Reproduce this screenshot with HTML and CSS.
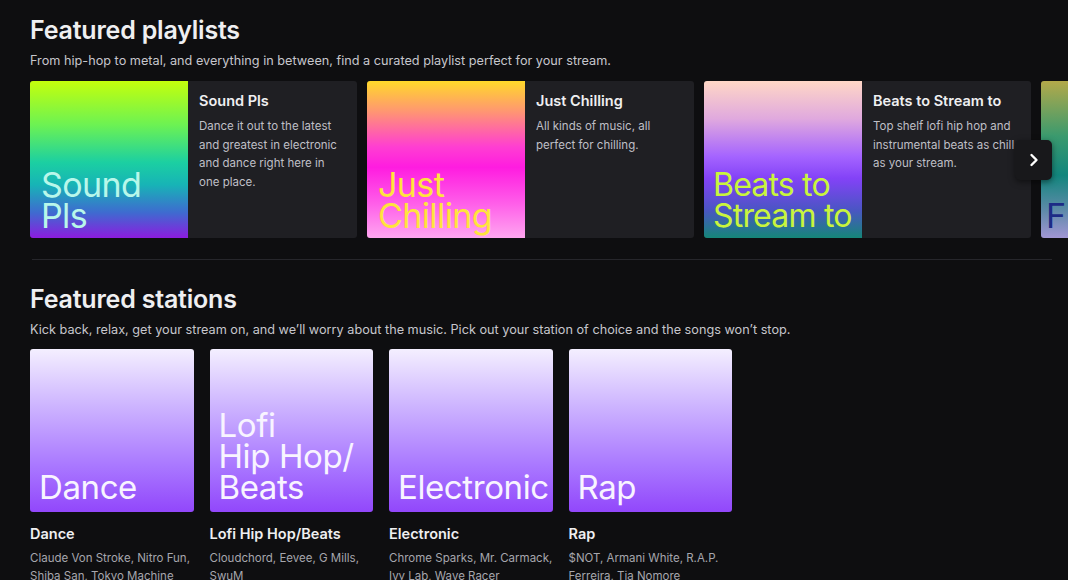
FILE: index.html
```html
<!DOCTYPE html>
<html lang="en">
<head>
  <meta charset="UTF-8">
  <meta name="viewport" content="width=device-width, initial-scale=1.0">
  <title>Soundtrack</title>
  <link rel="stylesheet" href="styles.css">
</head>
<body>
  <main class="page">
    <section class="shelf">
      <h2 class="shelf-title">Featured playlists</h2>
      <p class="shelf-sub">From hip-hop to metal, and everything in between, find a curated playlist perfect for your stream.</p>

      <div class="carousel">
        <div class="track">
          <div class="playlist">
            <div class="cover cover-sound"><span>Sound<br>Pls</span></div>
            <div class="playlist-info">
              <h3>Sound Pls</h3>
              <p>Dance it out to the latest and greatest in electronic and dance right here in one place.</p>
            </div>
          </div>

          <div class="playlist">
            <div class="cover cover-chill"><span>Just<br>Chilling</span></div>
            <div class="playlist-info">
              <h3>Just Chilling</h3>
              <p>All kinds of music, all perfect for chilling.</p>
            </div>
          </div>

          <div class="playlist">
            <div class="cover cover-beats"><span>Beats to<br>Stream to</span></div>
            <div class="playlist-info">
              <h3>Beats to Stream to</h3>
              <p>Top shelf lofi hip hop and instrumental beats as chill as your stream.</p>
            </div>
          </div>

          <div class="playlist">
            <div class="cover cover-focus"><span>F</span></div>
            <div class="playlist-info">
              <h3>Focus</h3>
              <p>Stay in the zone.</p>
            </div>
          </div>
        </div>

        <button class="next" aria-label="Next">
          <svg width="14" height="14" viewBox="0 0 14 14">
            <path d="M4.5 2 L9.5 7 L4.5 12" fill="none" stroke="#fff" stroke-width="2.4" stroke-linecap="round" stroke-linejoin="round"/>
          </svg>
        </button>
      </div>
    </section>

    <div class="divider"></div>

    <section class="shelf">
      <h2 class="shelf-title">Featured stations</h2>
      <p class="shelf-sub">Kick back, relax, get your stream on, and we’ll worry about the music. Pick out your station of choice and the songs won’t stop.</p>

      <div class="stations">
        <div class="station">
          <div class="station-cover"><span>Dance</span></div>
          <h3>Dance</h3>
          <p>Claude Von Stroke, Nitro Fun, Shiba San, Tokyo Machine</p>
        </div>
        <div class="station">
          <div class="station-cover"><span>Lofi<br>Hip Hop/<br>Beats</span></div>
          <h3>Lofi Hip Hop/Beats</h3>
          <p>Cloudchord, Eevee, G Mills, SwuM</p>
        </div>
        <div class="station">
          <div class="station-cover"><span>Electronic</span></div>
          <h3>Electronic</h3>
          <p>Chrome Sparks, Mr. Carmack, Ivy Lab, Wave Racer</p>
        </div>
        <div class="station">
          <div class="station-cover"><span>Rap</span></div>
          <h3>Rap</h3>
          <p>$NOT, Armani White, R.A.P. Ferreira, Tia Nomore</p>
        </div>
      </div>
    </section>
  </main>
</body>
</html>
```

FILE: styles.css
```css
/* General */
body {
  font-family: 'Inter', 'Noto Sans', sans-serif;
  margin: 0;
  padding: 0;
  background: #0e0e10;
  color: #efeff1;
  overflow: hidden;
}

.page {
  padding: 14px 0 0 30px;
}

.shelf-title {
  margin: 0;
  font-size: 25px;
  font-weight: 600;
  line-height: 32px;
  letter-spacing: -0.2px;
  color: #efeff1;
}

.shelf-sub {
  margin: 6px 0 11px;
  font-size: 12.7px;
  line-height: 18px;
  color: #c6c6cc;
}

/* Playlists carousel */
.carousel {
  position: relative;
  width: 1038px;
}

.track {
  display: flex;
  gap: 10px;
  overflow: hidden;
}

.playlist {
  flex: 0 0 327px;
  height: 157px;
  display: flex;
  background: #1f1f23;
  border-radius: 3px;
  overflow: hidden;
}

.cover {
  flex: 0 0 158px;
  display: flex;
  align-items: flex-end;
  padding: 0 0 7px 11px;
  box-sizing: border-box;
  white-space: nowrap;
}

.cover span {
  font-size: 34px;
  line-height: 31px;
  letter-spacing: -0.6px;
}

.cover-sound {
  background: linear-gradient(180deg, #c4ff0c 0%, #6cf253 28%, #1bcfa2 52%, #17b4b6 66%, #3f6ad0 84%, #8c1cdf 100%);
  color: #b8f7ea;
}

.cover-chill {
  background: linear-gradient(180deg, #ffd92a 0%, #ff9474 20%, #ff3ed2 42%, #ff1ce0 55%, #ff5ee9 78%, #ffa6f0 100%);
  color: #ffe43c;
}

.cover-beats {
  background: linear-gradient(180deg, #ffd7c6 0%, #e0a9de 24%, #a564ff 48%, #8342f7 62%, #4b55c4 82%, #158678 100%);
  color: #c9f53c;
  padding-left: 9px;
}

.cover-beats span {
  font-size: 32px;
  letter-spacing: -0.8px;
}

.cover-focus {
  background: linear-gradient(180deg, #b3a94a 0%, #3b9a6e 35%, #12867d 60%, #5d8aa8 82%, #a196d4 100%);
  color: #1d2b86;
  padding-left: 5px;
}

.playlist-info {
  padding: 10px 10px 0 11px;
}

.playlist-info h3 {
  margin: 0 0 6px;
  font-size: 14.5px;
  font-weight: 600;
  line-height: 20px;
  color: #efeff1;
}

.playlist-info p {
  margin: 0;
  font-size: 11.5px;
  line-height: 18.6px;
  color: #bfbfc6;
}

.next {
  position: absolute;
  top: 59px;
  right: 16px;
  width: 37px;
  height: 40px;
  border: none;
  border-radius: 5px;
  background: #18181b;
  box-shadow: 0 2px 6px rgba(0, 0, 0, 0.5);
  display: flex;
  align-items: center;
  justify-content: center;
  cursor: pointer;
}

.divider {
  margin: 21px 16px 0 2px;
  border-top: 1px solid #26262b;
}

.divider + .shelf {
  padding-top: 23px;
}

.divider + .shelf .shelf-sub {
  margin-bottom: 10px;
}

/* Stations */
.stations {
  display: flex;
  gap: 16px;
}

.station {
  width: 163.5px;
}

.station-cover {
  height: 163px;
  border-radius: 3px;
  background: linear-gradient(180deg, #f4efff 0%, #cdb4ff 35%, #a977ff 72%, #9247fb 100%);
  display: flex;
  align-items: flex-end;
  padding: 0 0 9px 9px;
  box-sizing: border-box;
  white-space: nowrap;
}

.station-cover span {
  font-size: 33px;
  line-height: 31px;
  letter-spacing: -0.4px;
  color: #f8f4ff;
}

.station h3 {
  margin: 12px 0 5px;
  font-size: 14.5px;
  font-weight: 600;
  line-height: 20px;
}

.station p {
  margin: 0;
  font-size: 11.5px;
  line-height: 18px;
  color: #a6a6ad;
}
```
